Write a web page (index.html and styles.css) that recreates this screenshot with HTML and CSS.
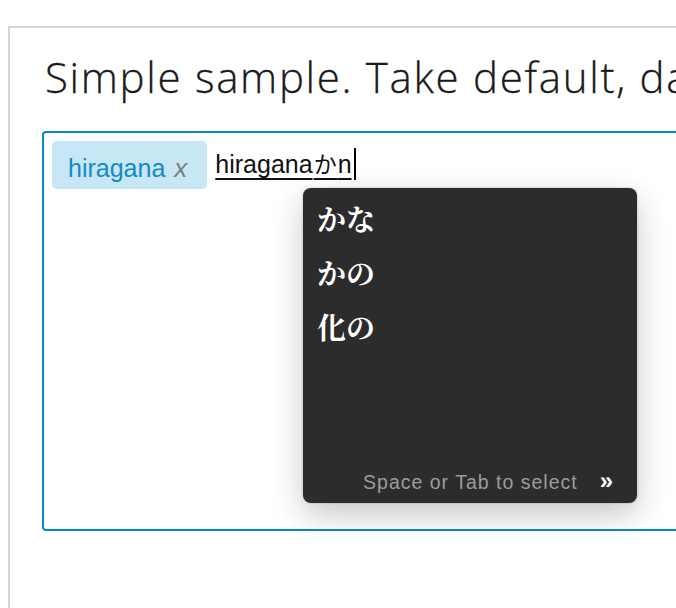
FILE: index.html
```html
<!DOCTYPE html>
<html lang="en">
<head>
<meta charset="utf-8">
<title>Simple sample</title>
<link rel="stylesheet" href="styles.css">
</head>
<body>
<div class="frame">
  <h1 class="title">Simple sample. Take default, data</h1>
  <div class="box">
    <div class="row">
      <span class="tag"><span class="tag-label">hiragana</span><span class="tag-x">x</span></span>
      <span class="entry"><span class="typed">hiragana<span class="kana">か</span>n</span><span class="caret"></span></span>
    </div>
    <div class="ime">
      <ul class="cands">
        <li>かな</li>
        <li>かの</li>
        <li>化の</li>
      </ul>
      <div class="ime-foot"><span class="hint">Space or Tab to select</span><span class="more">»</span></div>
    </div>
  </div>
</div>
</body>
</html>
```
FILE: styles.css
```css
html, body {
  margin: 0;
  padding: 0;
  overflow: hidden;
  background: #ffffff;
}
body {
  width: 676px;
  height: 608px;
  font-family: "Liberation Sans", Arial, sans-serif;
}
.frame {
  margin: 26px 0 0 8px;
  width: 900px;
  height: 700px;
  border-top: 2px solid #d4d4d4;
  border-left: 2px solid #d4d4d4;
  padding-left: 32px;
  box-sizing: border-box;
  overflow: hidden;
}
.title {
  margin: 24px 0 29px 3px;
  font-family: "Open Sans", "Noto Sans", sans-serif;
  font-weight: 300;
  font-size: 42px;
  line-height: 50px;
  color: #1a1a1a;
  -webkit-text-stroke: 0.3px #1a1a1a;
  white-space: nowrap;
  letter-spacing: 1.7px;
}
.box {
  position: relative;
  width: 760px;
  height: 400px;
  border: 2px solid #0a88c6;
  border-radius: 4px;
  box-sizing: border-box;
  padding: 8px;
}
.row {
  display: flex;
  align-items: flex-start;
  gap: 8px;
}
.tag {
  display: flex;
  align-items: flex-start;
  height: 48px;
  box-sizing: border-box;
  padding: 6px 20px 0 16px;
  background: #c6e7f3;
  border-radius: 5px;
  line-height: 42px;
  font-size: 25px;
}
.tag-label {
  color: #158ac4;
}
.tag-x {
  margin-left: 9px;
  color: #7b7f82;
  font-style: italic;
  font-size: 26px;
}
.entry {
  display: flex;
  align-items: flex-start;
  margin-top: 7px;
  font-size: 25px;
  line-height: 30px;
  color: #111111;
}
.typed {
  text-decoration: underline;
  text-decoration-thickness: 2px;
  text-underline-offset: 5px;
}
.kana {
  font-family: "Noto Sans CJK JP", sans-serif;
  font-size: 23px;
  margin-left: 1px;
  letter-spacing: 1px;
}
.caret {
  width: 2px;
  height: 32px;
  margin-left: 2px;
  background: #000000;
}
.ime {
  position: absolute;
  left: 259px;
  top: 55px;
  width: 334px;
  height: 315px;
  background: #2c2c2c;
  border-radius: 8px;
  box-shadow: 0 12px 32px rgba(0, 0, 0, 0.22), 0 0 2px rgba(0, 0, 0, 0.3);
  display: flex;
  flex-direction: column;
  justify-content: space-between;
}
.cands {
  list-style: none;
  margin: 0;
  padding: 4px 0 0 14px;
  font-family: "Noto Serif CJK JP", "Noto Sans CJK JP", serif;
  font-weight: 700;
  font-size: 29px;
  line-height: 54px;
  color: #ffffff;
}
.ime-foot {
  display: flex;
  justify-content: flex-end;
  align-items: baseline;
  gap: 22px;
  padding: 0 24px 9px 0;
  line-height: 24px;
}
.hint {
  font-size: 19.5px;
  letter-spacing: 1px;
  color: #9c9c9c;
}
.more {
  font-size: 24px;
  font-weight: 700;
  color: #ffffff;
}
```
